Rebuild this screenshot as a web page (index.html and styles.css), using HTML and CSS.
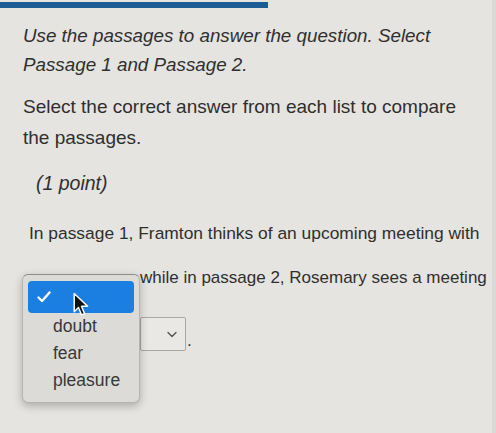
FILE: index.html
```html
<!DOCTYPE html>
<html lang="en">
<head>
<meta charset="utf-8">
<title>Question</title>
<link rel="stylesheet" href="styles.css">
</head>
<body>
<div class="topbar"></div>
<main class="content">
  <p class="instr">Use the passages to answer the question. Select<br>Passage 1 and Passage 2.</p>
  <p class="direct">Select the correct answer from each list to compare<br>the passages.</p>
  <p class="points">(1 point)</p>
  <div class="question">
    <div class="qline first">In passage 1, Framton thinks of an upcoming meeting with</div>
    <div class="qline second">
      <span class="select1"></span>
      <span>while in passage 2, Rosemary sees a meeting</span>
    </div>
    <div class="qline third">
      <span class="select2">
        <svg class="chev" width="10" height="7" viewBox="0 0 10 7"><path d="M1 1.5 L5 5.5 L9 1.5" fill="none" stroke="#555" stroke-width="1.4" stroke-linecap="round" stroke-linejoin="round"/></svg>
      </span>
      <span class="dot">.</span>
    </div>
    <div class="menu">
      <div class="item selected">
        <svg class="check" width="14" height="12" viewBox="0 0 14 12"><path d="M1.5 6.5 L5 10 L12.5 1.5" fill="none" stroke="#fff" stroke-width="2.4" stroke-linecap="round" stroke-linejoin="round"/></svg>
      </div>
      <div class="item">doubt</div>
      <div class="item">fear</div>
      <div class="item">pleasure</div>
      <svg class="cursor" width="17" height="25" viewBox="0 0 14 20"><path d="M1 1 L1 16 L4.5 12.5 L7 18.5 L9.5 17.5 L7 11.5 L12 11.5 Z" fill="#111" stroke="#fff" stroke-width="1.2" stroke-linejoin="round"/></svg>
    </div>
  </div>
</main>
</body>
</html>
```

FILE: styles.css
```css
html, body {
  margin: 0;
  padding: 0;
}
body {
  width: 496px;
  height: 433px;
  overflow: hidden;
  background: #e5e4e0;
  box-shadow: inset -4px 0 0 #dad9d5;
  font-family: "Liberation Sans", Arial, sans-serif;
  color: #2f2f2f;
  font-size: 17px;
}
.topbar {
  width: 268px;
  height: 6px;
  margin-top: 2px;
  background: #1d5b94;
}
.content {
  padding: 0 0 0 23px;
}
p {
  margin: 0;
  line-height: 29px;
}
.instr {
  font-style: italic;
  font-size: 18.8px;
  margin-top: 13px;
}
.direct {
  font-size: 19px;
  margin-top: 12px;
  line-height: 31px;
}
.points {
  font-style: italic;
  font-size: 19.5px;
  margin-top: 16px;
  padding-left: 13px;
}
.question {
  position: relative;
  margin-top: 21px;
  padding-left: 6px;
  font-size: 17.4px;
}
.qline {
  line-height: 28px;
}
.second {
  display: flex;
  align-items: center;
  margin-top: 16px;
  height: 30px;
  font-size: 17px;
}
.select1 {
  display: inline-block;
  width: 111px;
  height: 28px;
}
.third {
  display: flex;
  align-items: flex-end;
  margin-top: 24px;
}
.select2 {
  margin-left: 111px;
  width: 46px;
  height: 34px;
  border: 1px solid #a9a8a4;
  border-radius: 2px;
  background: #e9e8e5;
  box-sizing: border-box;
  display: flex;
  align-items: center;
  justify-content: flex-end;
  padding-right: 8px;
}
.dot {
  line-height: 22px;
  margin-left: 1px;
}
.menu {
  position: absolute;
  left: -1px;
  top: 55px;
  width: 118px;
  height: 129px;
  box-sizing: border-box;
  background: #dcdbd7;
  border: 1px solid #b5b4b0;
  border-top-color: #8e8d8a;
  border-radius: 6px;
  box-shadow: 0 3px 8px rgba(0,0,0,0.25);
  padding: 6px 5px;
}
.item {
  height: 27px;
  line-height: 27px;
  padding-left: 25px;
  font-size: 17.5px;
  color: #383838;
}
.item.selected {
  height: 32px;
  background: #1a7fe0;
  border-radius: 4px;
  padding-left: 9px;
  display: flex;
  align-items: center;
}
.cursor {
  position: absolute;
  left: 50px;
  top: 17px;
}
```
